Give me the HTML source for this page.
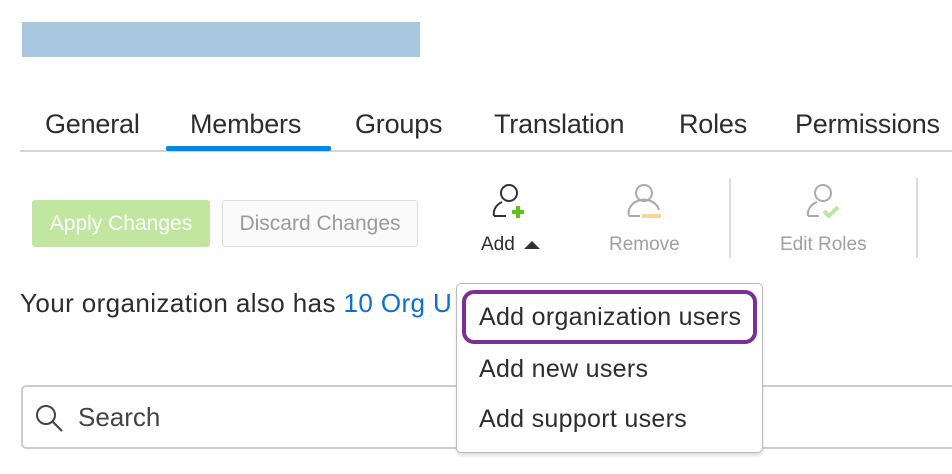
<!DOCTYPE html>
<html><head><meta charset="utf-8"><style>
body{margin:0;width:952px;height:474px;background:#fff;position:relative;overflow:hidden;font-family:"Liberation Sans",sans-serif;color:#2d2d2d}
.a{position:absolute;white-space:nowrap}
.tab{position:absolute;top:109px;font-size:27px;color:#2d2d2d;letter-spacing:-0.2px}
</style></head><body>
<div class="a" style="left:22px;top:22px;width:398px;height:35px;background:#a8c8df"></div>

<div class="tab" style="left:45px">General</div>
<div class="tab" style="left:190px">Members</div>
<div class="tab" style="left:355px">Groups</div>
<div class="tab" style="left:494px">Translation</div>
<div class="tab" style="left:679px">Roles</div>
<div class="tab" style="left:795px">Permissions</div>
<div class="a" style="left:20px;top:150px;width:932px;height:2px;background:#d4d4d4"></div>
<div class="a" style="left:166px;top:146px;width:165px;height:5px;background:#0a84e3;border-radius:2px"></div>

<div class="a" style="left:32px;top:200px;width:178px;height:47px;background:#c0e6a0;border-radius:3px;color:#fff;font-size:21px;line-height:47px;text-align:center">Apply Changes</div>
<div class="a" style="left:222px;top:200px;width:194px;height:45px;border:1px solid #ddd;background:#fafafa;border-radius:3px;color:#9a9a9a;font-size:21px;line-height:45px;text-align:center">Discard Changes</div>

<svg class="a" style="left:488px;top:180px" width="44" height="44" viewBox="0 0 44 44">
<circle cx="21" cy="13" r="8" fill="none" stroke="#333" stroke-width="2"/>
<path d="M6 36 A15 13 0 0 1 14 22" fill="none" stroke="#333" stroke-width="2"/>
<path d="M6 36 H18" stroke="#333" stroke-width="2"/>
<path d="M30 26 V38 M24 32 H36" stroke="#5ec21c" stroke-width="4"/>
</svg>
<div class="a" style="left:481px;top:234px;font-size:19px;color:#2d2d2d">Add</div>
<svg class="a" style="left:524px;top:240px" width="16" height="9"><path d="M0 9 L8 1 L16 9Z" fill="#333"/></svg>

<svg class="a" style="left:622px;top:180px" width="44" height="44" viewBox="0 0 44 44">
<circle cx="22" cy="13" r="8" fill="none" stroke="#aaa" stroke-width="2"/>
<path d="M7 36 A15 13 0 0 1 37 30" fill="none" stroke="#aaa" stroke-width="2"/>
<path d="M7 36 H18" stroke="#aaa" stroke-width="2"/>
<path d="M20 36 H39" stroke="#f7d49a" stroke-width="4"/>
</svg>
<div class="a" style="left:609px;top:234px;font-size:19px;color:#a0a0a0">Remove</div>

<div class="a" style="left:729px;top:178px;width:2px;height:80px;background:#ddd"></div>
<svg class="a" style="left:801px;top:180px" width="44" height="44" viewBox="0 0 44 44">
<circle cx="22" cy="13" r="8" fill="none" stroke="#aaa" stroke-width="2"/>
<path d="M7 36 A15 13 0 0 1 16 22" fill="none" stroke="#aaa" stroke-width="2"/>
<path d="M7 36 H18" stroke="#aaa" stroke-width="2"/>
<path d="M23 31 L28 36 L37 27" fill="none" stroke="#bfe6a2" stroke-width="4"/>
</svg>
<div class="a" style="left:780px;top:234px;font-size:19px;color:#a0a0a0">Edit Roles</div>
<div class="a" style="left:916px;top:178px;width:2px;height:80px;background:#ddd"></div>

<div class="a" style="left:20px;top:288px;font-size:26px;letter-spacing:0.4px;color:#2d2d2d">Your organization also has <span style="color:#0a6fd6">10 Org U</span></div>

<div class="a" style="left:21px;top:385px;width:960px;height:64px;border:2px solid #ccc;border-radius:5px;box-sizing:border-box"></div>
<svg class="a" style="left:35px;top:404px" width="30" height="30"><circle cx="11" cy="11" r="9" fill="none" stroke="#444" stroke-width="2"/><path d="M17.5 17.5 L27 27" stroke="#444" stroke-width="2.2"/></svg>
<div class="a" style="left:78px;top:402px;font-size:26px;color:#444">Search</div>

<div class="a" style="left:456px;top:283px;width:307px;height:170px;background:#fff;border:1px solid #bbb;border-radius:5px;box-sizing:border-box;box-shadow:0 3px 3px rgba(0,0,0,0.12)"></div>
<div class="a" style="left:462px;top:290px;width:295px;height:54px;border:4px solid #7b2f95;border-radius:12px;box-sizing:border-box"></div>
<div class="a" style="left:479px;top:303px;font-size:25px;letter-spacing:0.3px;color:#2d2d2d">Add organization users</div>
<div class="a" style="left:479px;top:355px;font-size:25px;letter-spacing:0.3px;color:#2d2d2d">Add new users</div>
<div class="a" style="left:479px;top:405px;font-size:25px;letter-spacing:0.3px;color:#2d2d2d">Add support users</div>
</body></html>
